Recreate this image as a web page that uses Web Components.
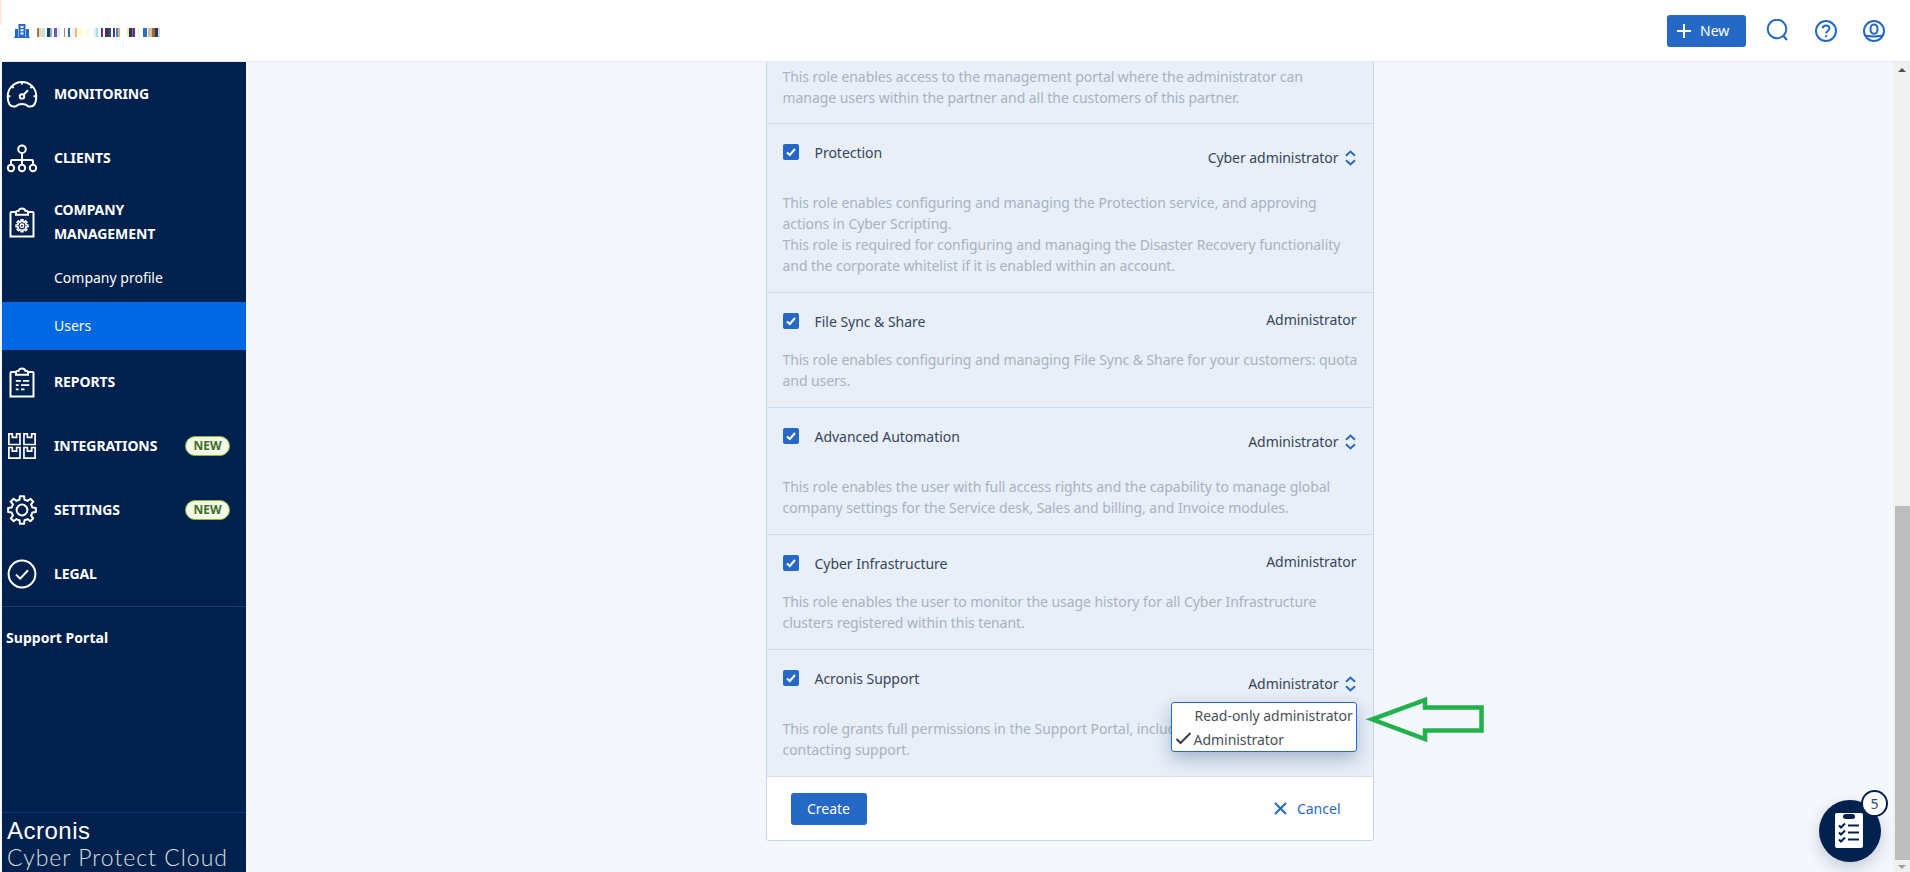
<!DOCTYPE html>
<html lang="en"><head><meta charset="utf-8"><title>Users</title>
<style>
html,body{margin:0;height:100%;overflow:hidden;background:#fff}
body{font:14px/20px "Noto Sans","Open Sans",sans-serif;color:#37455a}
.nw{white-space:nowrap}
</style></head>
<body>
<app-shell>
  <top-bar slot="top"></top-bar>
  <side-nav slot="nav">
    <nav-item icon="gauge">MONITORING</nav-item>
    <nav-item icon="tree">CLIENTS</nav-item>
    <nav-item icon="clipgear">COMPANY<br>MANAGEMENT</nav-item>
    <nav-item sub>Company profile</nav-item>
    <nav-item sub active>Users</nav-item>
    <nav-item icon="report">REPORTS</nav-item>
    <nav-item icon="boxes" badge="NEW">INTEGRATIONS</nav-item>
    <nav-item icon="gear" badge="NEW">SETTINGS</nav-item>
    <nav-item icon="legal">LEGAL</nav-item>
  </side-nav>
  <role-card>
    <role-row continued>
      This role enables access to the management portal where the administrator can manage users within the partner and all the customers of this partner.
    </role-row>
    <role-row label="Protection" value="Cyber administrator" select>
      This role enables configuring and managing the Protection service, and approving actions in Cyber Scripting.<br>This role is required for configuring and managing the Disaster Recovery functionality and the corporate whitelist if it is enabled within an account.
    </role-row>
    <role-row label="File Sync &amp; Share" value="Administrator">
      <span class="nw">This role enables configuring and managing File Sync &amp; Share for your customers: quota</span><br>and users.
    </role-row>
    <role-row label="Advanced Automation" value="Administrator" select>
      This role enables the user with full access rights and the capability to manage global company settings for the Service desk, Sales and billing, and Invoice modules.
    </role-row>
    <role-row label="Cyber Infrastructure" value="Administrator">
      This role enables the user to monitor the usage history for all Cyber Infrastructure clusters registered within this tenant.
    </role-row>
    <role-row label="Acronis Support" value="Administrator" select last>
      This role grants full permissions in the Support Portal, including<br>contacting support.
      <role-menu slot="overlay"></role-menu>
    </role-row>
    <card-footer slot="footer"></card-footer>
  </role-card>
  <task-fab slot="fab"></task-fab>
  <fake-scrollbar slot="scroll"></fake-scrollbar>
</app-shell>
<script>
function gearPath(cx,cy,R,r,n){
  let d='';const st=Math.PI*2/n;
  for(let i=0;i<n;i++){
    const a=i*st-Math.PI/2;
    const pts=[[r,a-st*.5],[r,a-st*.3],[R,a-st*.19],[R,a+st*.19],[r,a+st*.3]];
    pts.forEach((p,j)=>{const x=(cx+p[0]*Math.cos(p[1])).toFixed(2),y=(cy+p[0]*Math.sin(p[1])).toFixed(2);d+=(i===0&&j===0?'M':'L')+x+' '+y;});
  }
  return d+'Z';
}
const box=(dx,dy)=>`<path transform="translate(${dx} ${dy})" stroke-width="1.7" d="M2.85 3.85V14.5H14V3.85H10.6V7.4H6.3V3.85Z"/>`;
const ICONS={
 gauge:`<path d="M9.5 28.6H8C4 28.6 1.7 25 1.7 18.2A14.3 14.3 0 0 1 30.3 18.2C30.3 25 28 28.6 24 28.6H22.5C20.8 26.8 18.8 26 16 26S11.2 26.8 9.5 28.6Z"/><path d="M16 3.8V6.5M5.7 8.2L7.6 10M26.3 8.2L24.4 10M1.8 18.3H4.4M30.2 18.3H27.6"/><circle cx="16" cy="18.4" r="2.2"/><path d="M17.6 16.8L22 12.2"/>`,
 tree:`<circle cx="16" cy="7.2" r="3.8"/><path d="M16 11V22.5M5 22.5V19C5 18.4 5.4 18 6 18H26C26.6 18 27 18.4 27 19V22.5"/><circle cx="5" cy="26" r="3.2"/><circle cx="16" cy="26" r="3.2"/><circle cx="27" cy="26" r="3.2"/>`,
 clipgear:`<path d="M10 6H5.5C4.9 6 4.5 6.4 4.5 7V30.5H27.5V7C27.5 6.4 27.1 6 26.5 6H22"/><path d="M10 8.7V6.3C10 5.4 10.6 5 11.5 5H12.5C13 3.2 14.2 2.4 16 2.4S19 3.2 19.5 5H20.5C21.4 5 22 5.4 22 6.3V8.7Z"/><path stroke-width="1.6" d="${gearPath(16,19.8,6,4.2,8)}"/><circle cx="16" cy="19.8" r="1.7" stroke-width="1.5"/>`,
 report:`<path d="M10 6H5.5C4.9 6 4.5 6.4 4.5 7V30.5H27.5V7C27.5 6.4 27.1 6 26.5 6H22"/><path d="M10 8.7V6.3C10 5.4 10.6 5 11.5 5H12.5C13 3.2 14.2 2.4 16 2.4S19 3.2 19.5 5H20.5C21.4 5 22 5.4 22 6.3V8.7Z"/><path stroke-width="1.7" d="M9.8 14.8H15M17 14.8H23.2M9.8 19.2H12.6M15 19.2H23.2M9.8 23.4H12.6M15 23.4H18.5"/>`,
 boxes:box(0,0)+box(15.1,0)+box(0,13.65)+box(15.1,13.65),
 gear:`<path d="${gearPath(16,16,14,10.6,8)}" stroke-linejoin="round"/><circle cx="16" cy="16" r="5.4"/>`,
 legal:`<circle cx="16" cy="16" r="13.4"/><path d="M10 16.6L14.2 20.6L22 12.2"/>`
};
function def(name,html,init){
  customElements.define(name,class extends HTMLElement{
    constructor(){super();this.attachShadow({mode:'open'}).innerHTML=typeof html==='function'?html(this):html;}
    connectedCallback(){if(init)init(this);}
  });
}
def('app-shell',`<style>
:host{display:grid;grid-template-rows:62px 810px;height:872px;overflow:hidden;position:relative}
.row{display:flex;min-height:0;background:#f4f7fc;position:relative}
.main{flex:1;display:flex;justify-content:center;align-items:flex-start;min-width:0}
</style>
<slot name="top"></slot>
<div class="row"><slot name="nav"></slot><div class="main"><slot></slot></div><slot name="fab"></slot><slot name="scroll"></slot></div>`);

const STRIP=[[111,118,'#a97c50'],[118,126,'#fcd8a8'],[126,135,'#b5e8fb'],[141,150,'#26405a'],[150,156,'#7fb6d9'],[162,171,'#7856a8'],[171,180,'#d5f4fc'],[192,195,'#a98c6a'],[204,210,'#2a70b5'],[216,225,'#e8fbff'],[225,231,'#f2b56b'],[237,246,'#ffffc0'],[258,267,'#fffde0'],[282,288,'#d0f5ff'],[288,294,'#a0e0ff'],[303,309,'#6030a0'],[315,324,'#553045'],[324,333,'#30506a'],[339,345,'#5030a0'],[348,354,'#3090d0'],[354,360,'#eeb060'],[381,387,'#fde0c0'],[387,396,'#303848'],[396,399,'#3080c0'],[399,405,'#902060'],[411,420,'#e5fbff'],[429,441,'#3070c0'],[444,456,'#d0c0a8'],[456,465,'#a06838'],[465,474,'#303848'],[474,480,'#b0e0ff']];
def('top-bar',`<style>
:host{display:flex;align-items:center;height:62px;box-sizing:border-box;border-bottom:1px solid #e4e9f5;background:#fff linear-gradient(#ffe9e9,#ffe9e9) no-repeat 0 0/2px 25px;color:#2668c5}
.logo{display:flex;align-items:center;margin-left:14px;gap:7px}
.btn{margin-left:auto;width:79px;height:32px;box-sizing:border-box;background:#2668c5;border-radius:3px;color:#fff;display:flex;align-items:center;padding-left:10px;gap:9px;font-size:14px}
svg{display:block}
.ic{fill:none;stroke:#2668c5;stroke-width:2}
.tools{display:flex;align-items:center;margin-right:24px}
</style>
<div class="logo">
<svg width="16" height="14" viewBox="0 0 16 14" fill="#2668c5"><path d="M0 13H16V14H0ZM1 5H4V13H1ZM12 5H15V13H12ZM4.5 0H11.5V13H4.5Z"/><path fill="#fff" d="M6.5 2H9.5V4H6.5ZM6.5 5.2H9.5V7.2H6.5ZM6.5 8.4H9.5V10.4H6.5Z"/></svg>
<svg width="124" height="9" viewBox="0 0 124 9" style="margin-top:3px">${STRIP.map(s=>`<rect x="${s[0]/3-37}" width="${(s[1]-s[0])/3}" height="9" fill="${s[2]}"/>`).join('')}</svg>
</div>
<div class="btn"><svg width="14" height="14" viewBox="0 0 14 14"><path d="M7 0V14M0 7H14" stroke="#fff" stroke-width="2"/></svg><span>New</span></div>
<div class="tools">
<svg class="ic" width="24" height="24" viewBox="0 0 24 24" style="margin-left:20px"><circle cx="11" cy="10" r="9.3"/><path d="M17.5 17L21 21"/></svg>
<svg class="ic" width="24" height="24" viewBox="0 0 24 24" style="margin-left:24px"><circle cx="12" cy="12" r="10"/><path d="M8.6 9.4C8.8 7.6 10.2 6.6 12 6.6C13.9 6.6 15.4 7.8 15.4 9.5C15.4 11.8 12.2 11.8 12.2 14.4" /><path d="M12.2 16.2V18.2"/></svg>
<svg class="ic" width="24" height="24" viewBox="0 0 24 24" style="margin-left:24px"><circle cx="12" cy="12" r="10"/><rect x="8.6" y="5.4" width="6.8" height="9.4" rx="3.4"/><path d="M3.5 16.8C6 16.6 7.5 17.6 12 17.6S18 16.6 20.5 16.8"/></svg>
</div>`);

def('side-nav',`<style>
:host{display:flex;flex-direction:column;width:244px;margin-left:2px;background:#00204d;color:#fff;height:810px;flex:none}
.items{display:flex;flex-direction:column;border-bottom:1px solid #1c3a66}
.sup{height:64px;line-height:62px;padding-left:4px;font-weight:700;font-size:14px;letter-spacing:.04px}
.foot{margin-top:auto;border-top:1px solid #0c3a80;height:60px;box-sizing:border-box;padding:4px 0 0 5px;color:#fff}
.a{font:400 24px/27px "Liberation Sans",sans-serif;letter-spacing:.5px}
.c{font:300 23px/28px "Lato","Liberation Sans",sans-serif;letter-spacing:1px;white-space:nowrap;margin-top:-1px;opacity:.85}
</style>
<div class="items"><slot></slot></div>
<div class="sup">Support Portal</div>
<div class="foot"><div class="a">Acronis</div><div class="c">Cyber Protect Cloud</div></div>`);

def('nav-item',el=>{
  const ic=el.getAttribute('icon'),b=el.getAttribute('badge'),sub=el.hasAttribute('sub'),act=el.hasAttribute('active');
  return `<style>
:host{display:flex;align-items:center;position:relative;height:${sub?48:64}px;flex:none;background:${act?'#0068e3':'transparent'};font-weight:${sub?400:700};font-size:14px;line-height:24px;color:#fff;${sub?'':'letter-spacing:-.1px;'}}
.i{width:32px;height:32px;margin-left:4px;flex:none;fill:none;stroke:#fff;stroke-width:2;display:block}
.t{position:absolute;left:52px}
.b{position:absolute;left:183px;top:22px;width:45px;height:20px;box-sizing:border-box;border:1px solid #8db62e;border-radius:10px;background:#f3f8e8;color:#3f6e2a;font-size:12px;font-weight:700;line-height:18px;text-align:center;letter-spacing:0}
</style>
${ic?`<svg class="i" viewBox="0 0 32 32">${ICONS[ic]}</svg>`:''}<span class="t"><slot></slot></span>${b?`<span class="b">${b}</span>`:''}`;
});

def('role-card',`<style>
:host{display:flex;flex-direction:column;width:608px;box-sizing:border-box;border:1px solid #c5d6ec;border-top:0;border-radius:0 0 3px 3px;background:#fff}
</style><slot></slot><slot name="footer"></slot>`);

def('role-row',el=>{
  const c=el.hasAttribute('continued'),sel=el.hasAttribute('select'),last=el.hasAttribute('last');
  const label=(el.getAttribute('label')||'').replace(/&/g,'&amp;'),val=el.getAttribute('value')||'';
  return `<style>
:host{display:block;position:relative;box-sizing:border-box;background:#e8eff9;border-bottom:1px solid ${last?'#d8dee8':'#cddff3'};padding:${c?'4px 16px 15px 16px':'20px 16px 16px 16px'}}
.head{display:flex;justify-content:space-between;align-items:flex-start;height:${sel?24:19}px;margin-bottom:${sel?24:17}px}
.l{display:flex;align-items:flex-start}
.cb{width:16px;height:16px;flex:none;display:block}
.lb{margin:-1px 0 0 16px;color:#37455a;line-height:20px;letter-spacing:-.03px}
.v{color:#37455a;line-height:20px;margin-top:${sel?4:-3}px;display:flex;align-items:center;letter-spacing:-.05px}
.v svg{margin:0 1px 0 6px;display:block}
.d{color:#a9b2bf;line-height:21px;font-size:14px;letter-spacing:-.06px}
</style>
${c?'':`<div class="head"><div class="l"><svg class="cb" viewBox="0 0 16 16"><rect width="16" height="16" rx="2" fill="#2668c5"/><path d="M4 8.4L6.8 11L12 5" fill="none" stroke="#fff" stroke-width="2"/></svg><span class="lb">${label}</span></div><div class="v">${val}${sel?'<svg width="11" height="16" viewBox="0 0 11 16"><path d="M1 5.8L5.5 1.6L10 5.8M1 10.2L5.5 14.4L10 10.2" fill="none" stroke="#2668c5" stroke-width="2"/></svg>':''}</div></div>`}
<div class="d"><slot></slot></div><slot name="overlay"></slot>`;
});

def('role-menu',`<style>
:host{position:absolute;left:404px;top:52px;width:186px;height:50px;box-sizing:border-box;border:1px solid #2668c5;border-radius:3px;background:#fff;box-shadow:0 7px 18px rgba(0,32,77,.28);color:#4a4f57;font-size:14px;line-height:24px;letter-spacing:-.03px}
.o{position:relative;padding-left:22px;white-space:nowrap;height:24px}
.o.f{padding-left:23px;margin-top:1px}
svg.k{position:absolute;left:3px;top:3px}
svg.arrow{position:absolute;left:188px;top:-12px;overflow:visible}
</style>
<div class="o f">Read-only administrator</div>
<div class="o"><svg class="k" width="17" height="14" viewBox="0 0 17 14"><path d="M1.5 8L5.5 12L15.5 2" fill="none" stroke="#3c3c3c" stroke-width="2"/></svg>Administrator</div>
<svg class="arrow" width="130" height="60" viewBox="0 0 130 60"><path d="M12 28.3L65 9V16.5H121.5V39.5H65V48Z" fill="none" stroke="#22b14c" stroke-width="4.5"/></svg>`);

def('card-footer',`<style>
:host{display:flex;justify-content:space-between;align-items:center;height:63px;box-sizing:border-box;padding:0 32px 0 24px;background:#fff;border-radius:0 0 3px 3px}
.c{width:76px;height:32px;background:#2668c5;color:#fff;border-radius:3px;text-align:center;line-height:32px;margin-top:1px}
.x{display:flex;align-items:center;gap:10px;color:#2668c5}
</style><div class="c">Create</div><div class="x"><svg width="13" height="13" viewBox="0 0 13 13"><path d="M1 1L12 12M12 1L1 12" stroke="#2668c5" stroke-width="2" fill="none"/></svg><span>Cancel</span></div>`);

def('task-fab',`<style>
:host{position:absolute;left:1819px;top:738px;width:62px;height:62px;border-radius:50%;background:#00204d;box-shadow:0 6px 16px rgba(0,32,77,.2);display:block}
svg{position:absolute;left:16px;top:13px}
.n{position:absolute;left:42px;top:-10px;width:27px;height:27px;box-sizing:border-box;border:2px solid #00204d;border-radius:50%;background:#fff;color:#2c4a7a;font-size:14px;line-height:23px;text-align:center}
</style>
<svg width="28" height="35" viewBox="0 0 28 35"><rect width="28" height="35" rx="2" fill="#fff"/><rect x="8" y="1" width="12" height="5" rx="2.5" fill="#00204d"/><path d="M4 12.5L6 14.5L10 10.5M4 19.5L6 21.5L10 17.5M4 26.5L6 28.5L10 24.5" fill="none" stroke="#00204d" stroke-width="2"/><path d="M13 12.5H24M13 19.5H24M13 26.5H24" stroke="#00204d" stroke-width="2"/></svg>
<span class="n">5</span>`);

def('fake-scrollbar',`<style>
:host{display:block;width:17px;height:810px;flex:none;background:#f0f0f0;position:relative}
.t{position:absolute;left:2px;right:0;top:444px;height:354px;background:#bdbdbd}
.u,.d{position:absolute;left:5px;width:0;height:0;border-left:4px solid transparent;border-right:4px solid transparent}
.u{top:6px;border-bottom:4px solid #505050}
.d{top:803px;border-top:4px solid #a0a0a0}
</style><div class="u"></div><div class="t"></div><div class="d"></div>`);
</script>
</body></html>
